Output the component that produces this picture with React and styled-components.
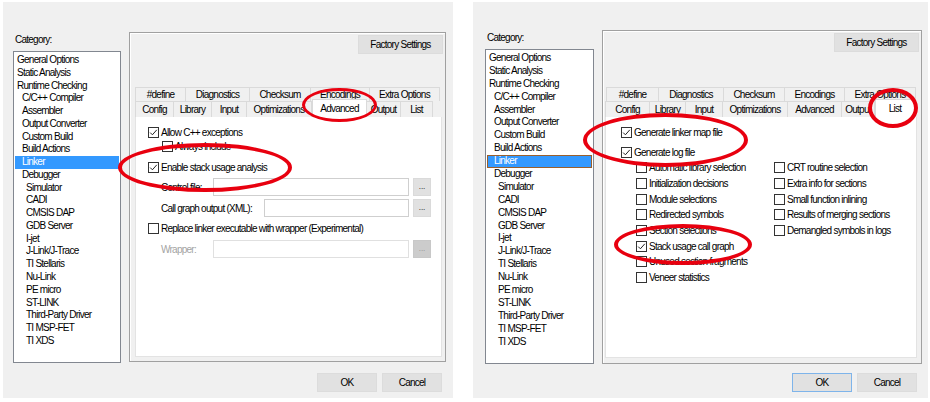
import styled, { createGlobalStyle } from "styled-components";

const GlobalStyle = createGlobalStyle`
  html, body {
    margin: 0;
    padding: 0;
    background: #fff;
  }
  body {
    font-family: "Liberation Sans", Arial, sans-serif;
    font-size: 10px;
    letter-spacing: -0.75px;
    color: #000;
  }
`;

const Page = styled.div`
  display: flex;
  gap: 20px;
  width: 930px;
  height: 402px;
  padding: 2px 0 0 3px;
  box-sizing: border-box;
`;

const DialogBox = styled.div`
  position: relative;
  width: ${(p) => p.$w}px;
  height: 396px;
  box-sizing: border-box;
  padding: ${(p) => p.$pt}px 11px 0 ${(p) => p.$pl}px;
  background: #f0f0f0;
  display: flex;
  flex-direction: column;
`;

const Body = styled.div`
  display: grid;
  grid-template-columns: ${(p) => p.$listW}px ${(p) => p.$panelW}px;
  column-gap: 8px;
  align-items: start;
`;

const SideCol = styled.div`
  display: flex;
  flex-direction: column;
  padding-top: 2px;
`;

const CategoryLabel = styled.div`
  line-height: 12px;
  height: 12px;
  margin-bottom: 5px;
  padding-left: 2px;
`;

const CategoryList = styled.div`
  height: ${(p) => p.$h}px;
  box-sizing: border-box;
  border: 1px solid #828790;
  background: #fff;
  padding: 2px 1px;
`;

const CategoryItem = styled.div`
  height: ${(p) => p.$lh}px;
  line-height: ${(p) => p.$lh}px;
  padding-left: ${(p) => [2, 7, 11][p.$level]}px;
  white-space: nowrap;
  background: ${(p) => (p.$selected ? "#3399ff" : "transparent")};
  color: ${(p) => (p.$selected ? "#fff" : "#000")};
  box-shadow: ${(p) => (p.$focus ? "inset 0 0 0 1px #9a5f2c" : "none")};
`;

const Panel = styled.div`
  height: ${(p) => p.$h}px;
  box-sizing: border-box;
  border: 1px solid #a0a0a0;
  box-shadow: inset 1px 1px 0 #fff;
  display: flex;
  flex-direction: column;
`;

const FactoryButton = styled.button`
  align-self: flex-end;
  width: 85px;
  height: 19px;
  margin: 2px 2px 0 0;
  padding: 0;
  border: 1px solid #dcdcdc;
  background: #e1e1e1;
  font: inherit;
  letter-spacing: inherit;
  color: #000;
`;

const TabRow = styled.div`
  display: flex;
  margin-left: ${(p) => p.$ml}px;
  margin-top: ${(p) => p.$mt || 0}px;
  height: ${(p) => p.$h}px;
  position: relative;
`;

const Tab = styled.div`
  width: ${(p) => p.$w}px;
  flex: none;
  box-sizing: border-box;
  height: ${(p) => (p.$selected ? p.$h + 2 : p.$h)}px;
  margin-top: ${(p) => (p.$selected ? -2 : 0)}px;
  border-top: 1px solid #dadada;
  border-right: 1px solid #dadada;
  border-left: ${(p) => (p.$first || p.$selected ? "1px solid #dadada" : "none")};
  background: ${(p) => (p.$selected ? "#fff" : "#f0f0f0")};
  display: flex;
  align-items: center;
  justify-content: center;
  white-space: nowrap;
  position: relative;
  z-index: ${(p) => (p.$selected ? 1 : 0)};
`;

const TabPage = styled.div`
  flex: 1;
  background: #fff;
  margin: 0 ${(p) => p.$mr}px ${(p) => p.$mb}px ${(p) => p.$ml}px;
  border: 1px solid #e3e3e3;
  border-top: none;
`;

const Form = styled.div`
  display: flex;
  flex-direction: column;
  padding: 8px 10px 0 ${(p) => p.$pl}px;
`;

const CheckRow = styled.div`
  display: flex;
  align-items: center;
  gap: 2px;
  height: 14px;
  margin-left: ${(p) => p.$indent || 0}px;
  margin-top: ${(p) => p.$mt || 0}px;
  white-space: nowrap;
`;

const BoxOuter = styled.span`
  width: 11px;
  height: 11px;
  box-sizing: border-box;
  border: 1px solid #333;
  background: #fff;
  flex: none;
  display: flex;
  align-items: center;
  justify-content: center;
`;

const FieldRow = styled.div`
  display: flex;
  align-items: center;
  height: 18px;
  margin-top: ${(p) => p.$mt}px;
  padding-left: 13px;
`;

const FieldLabel = styled.span`
  width: ${(p) => p.$w}px;
  flex: none;
  white-space: nowrap;
  color: ${(p) => (p.$disabled ? "#a3a3a3" : "#000")};
`;

const TextBox = styled.div`
  flex: 1;
  height: 18px;
  box-sizing: border-box;
  background: #fff;
  border: 1px solid ${(p) => (p.$disabled ? "#e0e0e0" : "#cfcfcf")};
`;

const BrowseButton = styled.div`
  width: 18px;
  height: 18px;
  margin-left: 4px;
  box-sizing: border-box;
  border: 1px solid ${(p) => (p.$disabled ? "#c8c8c8" : "#dadada")};
  background: ${(p) => (p.$disabled ? "#cccccc" : "#e1e1e1")};
  color: ${(p) => (p.$disabled ? "#8c8c8c" : "#000")};
  font-size: 8px;
  letter-spacing: 0;
  display: flex;
  align-items: flex-end;
  justify-content: center;
  padding-bottom: 4px;
  line-height: 8px;
`;

const OptionGrid = styled.div`
  display: grid;
  grid-template-columns: 138px auto;
  grid-template-rows: repeat(8, 15.7px);
  grid-auto-flow: column;
  align-items: center;
  margin: 1px 0 0 15px;
`;

const Footer = styled.div`
  display: flex;
  justify-content: flex-end;
  gap: 5px;
  margin-top: ${(p) => p.$mt}px;
`;

const DlgButton = styled.button`
  width: 60px;
  height: 19px;
  padding: 0;
  background: #e1e1e1;
  border: 1px solid ${(p) => (p.$focus ? "#7eb4ea" : "#dcdcdc")};
  font: inherit;
  letter-spacing: inherit;
  color: #000;
`;

const Mark = styled.div`
  position: absolute;
  left: ${(p) => p.$x}px;
  top: ${(p) => p.$y}px;
  width: ${(p) => p.$w}px;
  height: ${(p) => p.$h}px;
  box-sizing: border-box;
  border: ${(p) => p.$t || 3}px solid #e8000f;
  border-radius: 50%;
  pointer-events: none;
  z-index: 5;
`;

const categories = [
  ["General Options", 0],
  ["Static Analysis", 0],
  ["Runtime Checking", 0],
  ["C/C++ Compiler", 1],
  ["Assembler", 1],
  ["Output Converter", 1],
  ["Custom Build", 1],
  ["Build Actions", 1],
  ["Linker", 1],
  ["Debugger", 1],
  ["Simulator", 2],
  ["CADI", 2],
  ["CMSIS DAP", 2],
  ["GDB Server", 2],
  ["I-jet", 2],
  ["J-Link/J-Trace", 2],
  ["TI Stellaris", 2],
  ["Nu-Link", 2],
  ["PE micro", 2],
  ["ST-LINK", 2],
  ["Third-Party Driver", 2],
  ["TI MSP-FET", 2],
  ["TI XDS", 2],
];

const topTabs = ["#define", "Diagnostics", "Checksum", "Encodings", "Extra Options"];
const bottomTabs = ["Config", "Library", "Input", "Optimizations", "Advanced", "Output", "List"];

function Checkbox({ checked }) {
  return (
    <BoxOuter>
      {checked && (
        <svg width="9" height="9" viewBox="0 0 9 9">
          <polyline points="1.2,4.6 3.4,6.8 7.8,1.8" fill="none" stroke="#222" strokeWidth="1" />
        </svg>
      )}
    </BoxOuter>
  );
}

function Check({ label, checked, indent, mt }) {
  return (
    <CheckRow $indent={indent} $mt={mt}>
      <Checkbox checked={checked} />
      <span>{label}</span>
    </CheckRow>
  );
}

function Field({ label, labelW, mt, disabled }) {
  return (
    <FieldRow $mt={mt}>
      <FieldLabel $w={labelW} $disabled={disabled}>
        {label}
      </FieldLabel>
      <TextBox $disabled={disabled} />
      <BrowseButton $disabled={disabled}>...</BrowseButton>
    </FieldRow>
  );
}

function Dialog({ cfg, children, marks }) {
  return (
    <DialogBox $w={cfg.w} $pt={cfg.pt} $pl={cfg.pl}>
      <Body $listW={cfg.listW} $panelW={cfg.panelW}>
        <SideCol>
          <CategoryLabel>Category:</CategoryLabel>
          <CategoryList $h={cfg.listH}>
            {categories.map(([name, level]) => (
              <CategoryItem
                key={name}
                $lh={cfg.lh}
                $level={level}
                $selected={name === "Linker"}
                $focus={name === "Linker" && cfg.focusItem}
              >
                {name}
              </CategoryItem>
            ))}
          </CategoryList>
        </SideCol>
        <Panel $h={cfg.panelH}>
          <FactoryButton>Factory Settings</FactoryButton>
          <TabRow $ml={cfg.row1Ml} $mt={cfg.tabsGap} $h={14}>
            {topTabs.map((t, i) => (
              <Tab key={t} $w={cfg.row1[i]} $h={14} $first={i === 0}>
                {t}
              </Tab>
            ))}
          </TabRow>
          <TabRow $ml={cfg.row2Ml} $h={16}>
            {bottomTabs.map((t, i) => (
              <Tab key={t} $w={cfg.row2[i]} $h={16} $first={i === 0} $selected={i === cfg.selected}>
                {t}
              </Tab>
            ))}
          </TabRow>
          <TabPage $ml={cfg.pageMl} $mr={cfg.pageMr} $mb={cfg.pageMb}>
            {children}
          </TabPage>
        </Panel>
      </Body>
      <Footer $mt={cfg.footerMt}>
        <DlgButton $focus={cfg.focusOk}>OK</DlgButton>
        <DlgButton>Cancel</DlgButton>
      </Footer>
      {marks.map((m, i) => (
        <Mark key={i} $x={m[0]} $y={m[1]} $w={m[2]} $h={m[3]} $t={m[4]} />
      ))}
    </DialogBox>
  );
}

const leftCfg = {
  w: 450,
  pt: 30,
  pl: 10,
  listW: 108,
  listH: 312,
  lh: 12.77,
  panelW: 317,
  panelH: 330,
  tabsGap: 33,
  row1Ml: 5,
  row2Ml: 5,
  row1: [51, 64, 61, 59, 70],
  row2: [39, 38, 35, 65, 55, 34, 32],
  selected: 4,
  pageMl: 5,
  pageMr: 3,
  pageMb: 4,
  footerMt: 10,
};

const rightCfg = {
  w: 455,
  pt: 28,
  pl: 12,
  listW: 109,
  listH: 315,
  lh: 12.9,
  panelW: 320,
  panelH: 334,
  tabsGap: 35,
  row1Ml: 3,
  row2Ml: 2,
  row1: [53, 65, 61, 60, 71],
  row2: [45, 36, 37, 65, 54, 33, 40],
  selected: 6,
  pageMl: 2,
  pageMr: 4,
  pageMb: 5,
  footerMt: 9,
  focusItem: true,
  focusOk: true,
};

export default function App() {
  return (
    <>
      <GlobalStyle />
      <Page>
        <Dialog
          cfg={leftCfg}
          marks={[
            [299, 86, 75, 34, 3],
            [115, 141, 174, 49, 4],
          ]}
        >
          <Form $pl={12}>
            <Check label="Allow C++ exceptions" checked />
            <Check label="Always include" indent={14} />
            <Check label="Enable stack usage analysis" checked mt={7} />
            <Field label="Control file:" labelW={52} mt={4} />
            <Field label="Call graph output (XML):" labelW={103} mt={3} />
            <Check label="Replace linker executable with wrapper (Experimental)" mt={4} />
            <Field label="Wrapper:" labelW={52} mt={5} disabled />
          </Form>
        </Dialog>
        <Dialog
          cfg={rightCfg}
          marks={[
            [110, 111, 165, 54, 4],
            [395, 86, 50, 40, 4],
            [141, 222, 138, 41, 4],
          ]}
        >
          <Form $pl={15}>
            <Check label="Generate linker map file" checked />
            <Check label="Generate log file" checked mt={6} />
            <OptionGrid>
              <Check label="Automatic library selection" />
              <Check label="Initialization decisions" />
              <Check label="Module selections" />
              <Check label="Redirected symbols" />
              <Check label="Section selections" />
              <Check label="Stack usage call graph" checked />
              <Check label="Unused section fragments" />
              <Check label="Veneer statistics" />
              <Check label="CRT routine selection" />
              <Check label="Extra info for sections" />
              <Check label="Small function inlining" />
              <Check label="Results of merging sections" />
              <Check label="Demangled symbols in logs" />
            </OptionGrid>
          </Form>
        </Dialog>
      </Page>
    </>
  );
}
